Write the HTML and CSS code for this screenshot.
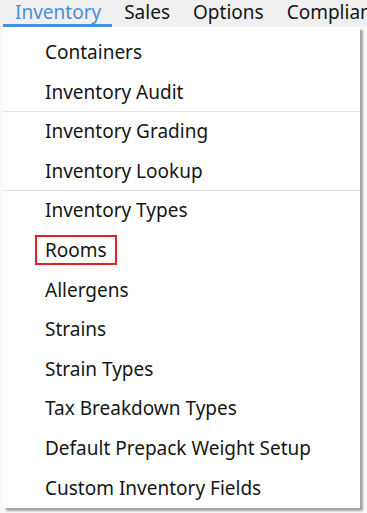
FILE: index.html
```html
<!DOCTYPE html>
<html lang="en">
<head>
    <meta charset="UTF-8">
    <meta name="viewport" content="width=device-width, initial-scale=1.0">
    <title>Inventory Menu</title>
    <link rel="stylesheet" href="styles.css">
</head>
<body>

<div class="menubar">
    <div class="menuItem active">Inventory</div>
    <div class="menuItem">Sales</div>
    <div class="menuItem">Options</div>
    <div class="menuItem">Compliance</div>
</div>

<div class="dropdown">
    <div class="dropItem">Containers</div>
    <div class="dropItem divider">Inventory Audit</div>
    <div class="dropItem">Inventory Grading</div>
    <div class="dropItem divider">Inventory Lookup</div>
    <div class="dropItem">Inventory Types</div>
    <div class="dropItem"><span class="marked">Rooms</span></div>
    <div class="dropItem">Allergens</div>
    <div class="dropItem">Strains</div>
    <div class="dropItem">Strain Types</div>
    <div class="dropItem">Tax Breakdown Types</div>
    <div class="dropItem">Default Prepack Weight Setup</div>
    <div class="dropItem">Custom Inventory Fields</div>
</div>

</body>
</html>
```

FILE: styles.css
```css
body {
    font-family: 'Noto Sans', 'Open Sans', sans-serif;
    margin: 0;
    padding: 0;
    background-color: #fafafa;
    color: #161616;
    overflow: hidden;
    height: 513px;
}

.menubar {
    display: flex;
    background-color: #f0f0f0;
    height: 27px;
    padding-left: 3px;
    white-space: nowrap;
    overflow: hidden;
}

.menuItem {
    font-size: 19px;
    line-height: 24px;
    padding: 0 11px 0 12px;
    border-bottom: 3px solid transparent;
}

.menuItem.active {
    color: #4a8fdc;
    border-bottom-color: #4a8fdc;
}

.dropdown {
    width: 357px;
    margin-left: 3px;
    padding-top: 6px;
    background-color: #fff;
    box-shadow: 3px 3px 2px rgba(0, 0, 0, 0.35);
}

.dropItem {
    height: 39.6px;
    line-height: 39px;
    padding-left: 42px;
    font-size: 19px;
    box-sizing: border-box;
    white-space: nowrap;
}

.dropItem.divider {
    border-bottom: 1px solid #dde3f1;
}

.marked {
    display: inline-block;
    line-height: 26px;
    padding: 0 8px;
    margin-left: -10px;
    border: 2px solid #e02128;
}
```
